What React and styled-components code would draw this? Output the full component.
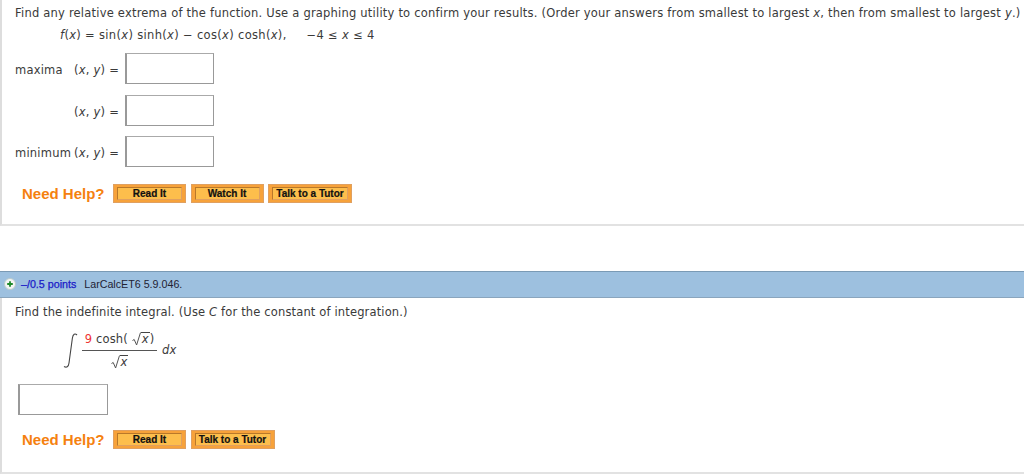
import React from "react";
import styled, { createGlobalStyle } from "styled-components";

const Global = createGlobalStyle`
  html, body { margin: 0; padding: 0; background: #fff; }
  body { font-family: "DejaVu Sans", Verdana, sans-serif; color: #3a3a3a; overflow: hidden; }
`;
const Page = styled.div`width: 1024px; height: 474px; overflow: hidden;`;
const Question = styled.section`
  height: ${p => p.$h}px;
  box-sizing: border-box;
  border-left: 2px solid #ddd;
  border-bottom: 2px solid #e2e2e2;
  padding: ${p => p.$pt}px 0 0 13px;
  font-size: 11.500px;
  letter-spacing: ${p => p.$ls}px;
`;
const Line = styled.div`line-height: 14px; white-space: nowrap;`;
const Formula = styled.div`
  margin: ${p => p.$mt}px 0 0 ${p => p.$ml}px;
  line-height: 14px;
  white-space: pre;
  letter-spacing: 0.32px;
`;
const Answers = styled.div`
  display: grid;
  grid-template-columns: 110px 89px;
  grid-auto-rows: 31px;
  row-gap: 10.500px;
  margin-top: 11px;
  align-items: center;
`;
const Label = styled.div`
  display: flex;
  justify-content: ${p => p.$end ? "flex-end" : "space-between"};
  padding: 3px 6px 0 0;
  white-space: pre;
`;
const Input = styled.div`
  box-sizing: border-box;
  width: ${p => p.$w || 89}px;
  height: 31px;
  border: 1px solid #999;
  border-top-color: #aaa;
  border-left-width: 2px;
  background: #fff;
`;
const Help = styled.div`
  display: flex;
  align-items: center;
  margin: ${p => p.$mt}px 0 0 7px;
  gap: 4.500px;
`;
const HelpLabel = styled.span`
  font: bold 15px "Liberation Sans", Arial, sans-serif;
  letter-spacing: 0;
  color: #f5810f;
  width: 86.500px;
`;
const Btn = styled.span`
  box-sizing: border-box;
  width: ${p => p.$w}px;
  height: 19px;
  border: 1px solid #e0a060;
  background: #f7a23a;
  padding: 2px 3px;
  display: flex;
`;
const BtnInner = styled.span`
  flex: 1;
  background: #fdbe4c;
  border: 1px solid #b9782a;
  border-right-color: #e0a060;
  border-bottom-color: #e0a060;
  display: flex;
  align-items: center;
  justify-content: center;
  font: bold 10px "Liberation Sans", Arial, sans-serif;
  letter-spacing: 0;
  color: #111;
  -webkit-text-stroke: 0.2px #111;
  white-space: nowrap;
`;
const Spacer = styled.div`height: 45px;`;
const Header = styled.header`
  box-sizing: border-box;
  height: 27px;
  background: #9dc0df;
  border-top: 1px solid #7a9ab5;
  border-bottom: 1px solid #8aa5bd;
  display: flex;
  align-items: center;
  padding: 0 0 1px 4px;
  font: 10.700px "Liberation Sans", Arial, sans-serif;
  color: #222;
`;
const PlusIcon = styled.svg`width: 12px; height: 12px; margin-right: 5px; flex: none;`;
const Points = styled.span`color: #1a1ac8; margin-right: 8px; -webkit-text-stroke: 0.25px #1a1ac8;`;
const Code = styled.span`color: #223;`;
const Integral = styled.div`
  display: flex;
  align-items: center;
  margin: 10px 0 0 46px;
  height: 44px;
`;
const IntSign = styled.svg`width: 18px; height: 36px; margin-right: 3px; flex: none;`;
const Fraction = styled.div`display: flex; flex-direction: column; align-items: center; width: 75px;`;
const Num = styled.div`height: 19px; line-height: 17px; white-space: pre; border-bottom: 1px solid #555; width: 100%; text-align: center;`;
const Den = styled.div`height: 20px; line-height: 22px; white-space: pre;`;
const Red = styled.span`color: #ee3333;`;
const Radical = styled.span`display: inline-flex; align-items: flex-start; vertical-align: -3px;`;
const RadicalSign = styled.svg`width: 9px; height: 14px; flex: none;`;
const Rad = styled.span`border-top: 1px solid #444; padding: 0 1px; line-height: 13px; display: inline-block;`;
const DX = styled.i`margin: 0 0 3px 5px; font-style: italic;`;
const AnswerBox = styled.div`margin: 11px 0 0 3px;`;

const X = ({ children }) => <i>{children}</i>;

const Root = ({ children }) => (
  <Radical>
    <RadicalSign viewBox="0 0 9 14">
      <path d="M0.500 8.500 2.200 7.500 4.600 13 8.500 0.500" fill="none" stroke="#555" strokeWidth="1" />
    </RadicalSign>
    <Rad><i>{children}</i></Rad>
  </Radical>
);

export default function App() {
  return (
    <Page>
      <Global />
      <Question $h={226} $pt={6} $ls={0.21}>
        <Line>
          Find any relative extrema of the function. Use a graphing utility to confirm your results. (Order your answers from smallest to largest <X>x</X>, then from smallest to largest <X>y</X>.)
        </Line>
        <Formula $mt={8} $ml={45}>
          <X>f</X>(<X>x</X>) = sin(<X>x</X>) sinh(<X>x</X>) − cos(<X>x</X>) cosh(<X>x</X>),{"     "}−4 ≤ <X>x</X> ≤ 4
        </Formula>
        <Answers>
          <Label><span>maxima</span><span>(<X>x</X>, <X>y</X>) =</span></Label>
          <Input />
          <Label $end><span>(<X>x</X>, <X>y</X>) =</span></Label>
          <Input />
          <Label><span>minimum</span><span>(<X>x</X>, <X>y</X>) =</span></Label>
          <Input />
        </Answers>
        <Help $mt={17}>
          <HelpLabel>Need Help?</HelpLabel>
          <Btn $w={73}><BtnInner>Read It</BtnInner></Btn>
          <Btn $w={73}><BtnInner>Watch It</BtnInner></Btn>
          <Btn $w={84}><BtnInner>Talk to a Tutor</BtnInner></Btn>
        </Help>
      </Question>
      <Spacer />
      <Header>
        <PlusIcon viewBox="0 0 12 12">
          <circle cx="6" cy="6" r="5.500" fill="#f4f4f4" stroke="#bcc" />
          <path d="M6 3.200v5.600M3.200 6h5.600" stroke="#1f8a2a" strokeWidth="1.800" />
        </PlusIcon>
        <Points>–/0.5 points</Points>
        <Code>LarCalcET6 5.9.046.</Code>
      </Header>
      <Question $h={176} $pt={7} $ls={0.15}>
        <Line>Find the indefinite integral. (Use <X>C</X> for the constant of integration.)</Line>
        <Integral>
          <IntSign viewBox="0 0 18 36">
            <path d="M16 2c-2-2-4-1-4.600 3L8 30c-.5 4-2.500 5-5 3.500" fill="none" stroke="#444" strokeWidth="1.100" />
          </IntSign>
          <Fraction>
            <Num><Red>9</Red> cosh( <Root>x</Root>)</Num>
            <Den><Root>x</Root></Den>
          </Fraction>
          <DX>dx</DX>
        </Integral>
        <AnswerBox><Input $w={90} /></AnswerBox>
        <Help $mt={15}>
          <HelpLabel>Need Help?</HelpLabel>
          <Btn $w={73}><BtnInner>Read It</BtnInner></Btn>
          <Btn $w={84}><BtnInner>Talk to a Tutor</BtnInner></Btn>
        </Help>
      </Question>
    </Page>
  );
}
